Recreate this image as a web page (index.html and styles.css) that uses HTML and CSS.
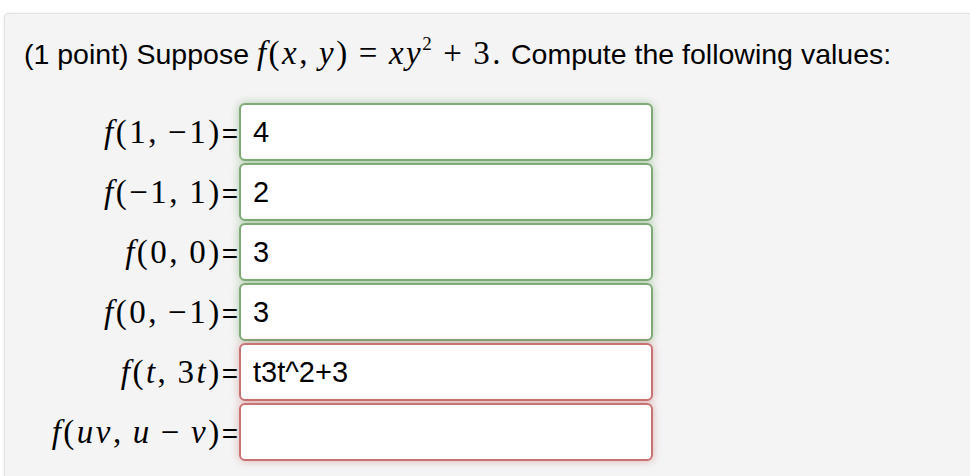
FILE: index.html
```html
<!DOCTYPE html>
<html lang="en">
<head>
    <meta charset="UTF-8">
    <title>Problem</title>
    <link rel="stylesheet" href="styles.css">
</head>
<body>
    <div class="problem">
        <p class="statement">
            (1 point) Suppose
            <span class="math"><i>f</i>(<i>x</i>,&thinsp;<i>y</i>)<span class="op">=</span><i>x</i><i>y</i><sup>2</sup><span class="op">+</span>3.</span>
            Compute the following values:
        </p>

        <div class="answers">
            <div class="answer-row">
                <label class="answer-label"><span class="math"><i>f</i>(1,&thinsp;&minus;1)</span>=</label>
                <input class="answer correct" type="text" value="4">
            </div>
            <div class="answer-row">
                <label class="answer-label"><span class="math"><i>f</i>(&minus;1,&thinsp;1)</span>=</label>
                <input class="answer correct" type="text" value="2">
            </div>
            <div class="answer-row">
                <label class="answer-label"><span class="math"><i>f</i>(0,&thinsp;0)</span>=</label>
                <input class="answer correct" type="text" value="3">
            </div>
            <div class="answer-row">
                <label class="answer-label"><span class="math"><i>f</i>(0,&thinsp;&minus;1)</span>=</label>
                <input class="answer correct" type="text" value="3">
            </div>
            <div class="answer-row">
                <label class="answer-label"><span class="math"><i>f</i>(<i>t</i>,&thinsp;3<i>t</i>)</span>=</label>
                <input class="answer incorrect" type="text" value="t3t^2+3">
            </div>
            <div class="answer-row">
                <label class="answer-label"><span class="math"><i>f</i>(<i>u</i><i>v</i>,&thinsp;<i>u</i><span class="op">&minus;</span><i>v</i>)</span>=</label>
                <input class="answer incorrect" type="text" value="">
            </div>
        </div>
    </div>
</body>
</html>
```

FILE: styles.css
```css
/* Base */
* {
    margin: 0;
    padding: 0;
    box-sizing: border-box;
}

body {
    background-color: #ffffff;
    color: #000000;
    font-family: "Liberation Sans", Arial, sans-serif;
    overflow: hidden;
}

/* Problem panel */
.problem {
    margin: 13px 0 0 4px;
    width: 1000px;
    height: 500px;
    background-color: #f4f4f4;
    border: 1px solid #e2e2e2;
    border-radius: 5px 0 0 0;
    box-shadow: -1px -1px 2px rgba(0, 0, 0, 0.04);
    padding: 22px 0 0 19px;
}

.statement {
    font-size: 28.5px;
    line-height: 34px;
    white-space: nowrap;
}

/* Math text */
.math {
    font-family: "Liberation Serif", "Times New Roman", serif;
    font-size: 33px;
    letter-spacing: 2.5px;
}

.math i {
    font-style: italic;
}

.math sup {
    font-size: 19px;
    vertical-align: 14px;
    line-height: 0;
    margin-left: -1px;
}

.op {
    padding: 0 9px;
}

/* Answer rows */
.answers {
    margin-top: 32px;
    display: flex;
    flex-direction: column;
    gap: 2px;
}

.answer-row {
    display: flex;
    align-items: center;
}

.answer-label {
    width: 215px;
    text-align: right;
    font-size: 28px;
    padding-right: 1px;
    white-space: nowrap;
}

.answer {
    width: 414px;
    height: 58px;
    border: 2px solid #7fa877;
    border-radius: 6px;
    background-color: #ffffff;
    font-family: "Liberation Sans", Arial, sans-serif;
    font-size: 29px;
    padding: 0 12px;
    color: #000000;
    outline: none;
}

.answer.correct {
    border-color: #7faa77;
    box-shadow: 0 0 8px rgba(90, 150, 80, 0.45);
}

.answer.incorrect {
    border-color: #c87373;
    box-shadow: 0 0 8px rgba(190, 80, 80, 0.4);
}
```
